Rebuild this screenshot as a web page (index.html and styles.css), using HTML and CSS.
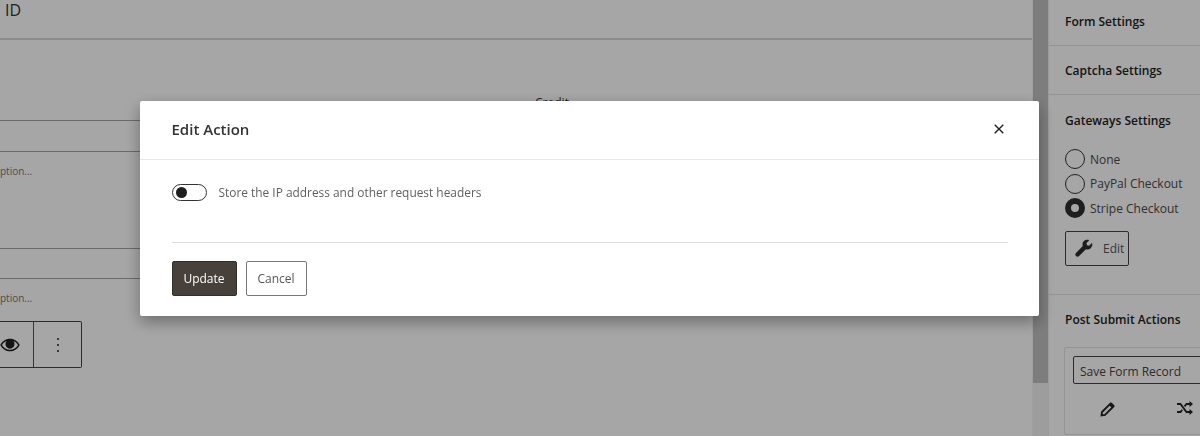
FILE: index.html
```html
<!DOCTYPE html>
<html>
<head>
    <link rel="stylesheet" href="styles.css">
</head>
<body>
    <div class="page">
        <!-- Form editor -->
        <div class="editor">
            <div class="editor-header">ID</div>
            <div class="editor-title">Credit</div>
            <div class="field-line"></div>
            <div class="field-line field-line-second"></div>
            <div class="field-hint">ption...</div>
            <div class="field-line field-line-third"></div>
            <div class="field-line field-line-fourth"></div>
            <div class="field-hint">ption...</div>
            <div class="field-tools">
                <button class="tool tool-eye">
                    <svg width="22" height="16" viewBox="0 0 22 16">
                        <path fill="#1f1f1f" d="M11 1C6.200 1 2.300 4 .3 8c2 4 5.900 7 10.700 7s8.700-3 10.700-7c-2-4-5.900-7-10.700-7zm0 12.300C7.400 13.300 4 11.300 2.200 8 3.400 6 5.100 4.500 7.200 3.600 6.400 4.500 6 5.700 6 7c0 2.800 2.200 5 5 5s5-2.200 5-5c0-1.300-.4-2.500-1.200-3.400 2.100.9 3.800 2.400 5 4.400-1.800 3.300-5.200 5.300-8.800 5.300z"/>
                    </svg>
                </button>
                <button class="tool tool-more">
                    <svg width="4" height="16" viewBox="0 0 4 16">
                        <circle cx="2" cy="2" r="1.100" fill="#333"/>
                        <circle cx="2" cy="8" r="1.100" fill="#333"/>
                        <circle cx="2" cy="14" r="1.100" fill="#333"/>
                    </svg>
                </button>
            </div>
        </div>

        <div class="scrollbar"><div class="scrollbar-thumb"></div></div>

        <!-- Sidebar -->
        <div class="sidebar">
            <div class="panel panel-closed">Form Settings</div>
            <div class="panel panel-closed">Captcha Settings</div>
            <div class="panel panel-gateways">
                <div class="panel-title">Gateways Settings</div>
                <label class="radio"><span class="radio-dot"></span>None</label>
                <label class="radio"><span class="radio-dot"></span>PayPal Checkout</label>
                <label class="radio"><span class="radio-dot radio-checked"></span>Stripe Checkout</label>
                <button class="edit-button">
                    <svg width="18" height="18" viewBox="0 0 18 18">
                        <path fill="#2b2b2b" d="M17.300 4.300c-.1-.3-.4-.3-.6-.1l-2.500 2.500-2.300-.4-.4-2.300L14 1.500c.2-.2.100-.5-.1-.6-1.700-.5-3.700-.1-5 1.200-1.400 1.400-1.700 3.300-1.100 5L1 13.900c-.9.900-.9 2.200 0 3.100.9.900 2.200.9 3.100 0l6.800-6.800c1.700.6 3.600.2 5-1.200 1.300-1.300 1.700-3.200 1.200-4.700z"/>
                    </svg>
                    Edit
                </button>
            </div>
            <div class="panel panel-actions">
                <div class="panel-title">Post Submit Actions</div>
                <div class="action-card">
                    <div class="action-name">Save Form Record</div>
                    <div class="action-icons">
                        <svg width="16" height="16" viewBox="0 0 16 16">
                            <path fill="none" stroke="#222" stroke-width="1.800" d="M2 11L10.500 2.500l3 3L5 14l-3.500.5z"/>
                            <path fill="#222" d="M9 4l3 3 2.500-2.500-3-3z"/>
                        </svg>
                        <svg width="16" height="14" viewBox="0 0 16 14">
                            <path fill="none" stroke="#222" stroke-width="1.800" d="M0 3h3.500l6 8H13M0 11h3.500l1.700-2.300M7.500 5.300L9.500 3H13"/>
                            <path fill="#222" d="M12.500 0l3.500 3-3.500 3zM12.500 8l3.500 3-3.500 3z"/>
                        </svg>
                    </div>
                </div>
            </div>
        </div>
    </div>

    <div class="overlay"></div>

    <!-- Edit action dialog -->
    <div class="modal">
        <div class="modal-header">
            <span class="modal-title">Edit Action</span>
            <svg class="modal-close" width="10" height="10" viewBox="0 0 10 10">
                <path stroke="#222" stroke-width="1.400" d="M.7.7l8.600 8.600M9.300.7L.7 9.300"/>
            </svg>
        </div>
        <div class="modal-body">
            <div class="toggle-row">
                <span class="toggle"><span class="toggle-knob"></span></span>
                <span>Store the IP address and other request headers</span>
            </div>
            <div class="modal-actions">
                <button class="btn btn-primary">Update</button>
                <button class="btn btn-secondary">Cancel</button>
            </div>
        </div>
    </div>
</body>
</html>
```

FILE: styles.css
```css
html, body {
    height: 100%;
    margin: 0;
    overflow: hidden;
}

body {
    background-color: #fff;
    color: #333;
    font-family: "Open Sans", "Noto Sans", sans-serif;
}

.page {
    display: flex;
    height: 436px;
}

button {
    font-family: inherit;
    cursor: pointer;
}

/* Form editor */
.editor {
    width: 1033px;
    flex-shrink: 0;
    border-right: 1px solid #f4f4f4;
    box-sizing: border-box;
}

.editor-header {
    height: 38px;
    padding-left: 5px;
    border-bottom: 2px solid #d8d8d8;
    font-size: 16px;
    line-height: 21px;
    color: #333;
}

.editor-title {
    height: 25px;
    margin-top: 55px;
    padding-left: 72px;
    text-align: center;
    font-size: 12px;
    line-height: 16px;
}

.field-line {
    height: 1px;
    background-color: #a4a4a4;
}

.field-line-second {
    margin-top: 30px;
}

.field-line-third {
    margin-top: 70px;
}

.field-line-fourth {
    margin-top: 29px;
}

.field-hint {
    margin-top: 12px;
    font-size: 10px;
    line-height: 14px;
    color: #777;
}

.field-tools {
    display: flex;
    width: 82px;
    height: 47px;
    margin-top: 16px;
    box-sizing: border-box;
    border: 1px solid #444;
    border-left: none;
    border-radius: 0 2px 2px 0;
}

.tool {
    display: flex;
    align-items: center;
    justify-content: center;
    padding: 0;
    background: none;
    border: none;
}

.tool-eye {
    width: 34px;
    border-right: 1px solid #555;
    justify-content: flex-end;
    padding-right: 13px;
    box-sizing: border-box;
}

.tool-more {
    width: 47px;
}

/* Scrollbar */
.scrollbar {
    width: 15px;
    flex-shrink: 0;
    background-color: #f1f1f1;
}

.scrollbar-thumb {
    height: 383px;
    background-color: #c1c1c1;
}

/* Sidebar */
.sidebar {
    flex: 1;
    min-width: 0;
    border-left: 1px solid #eee;
    font-size: 12px;
}

.panel {
    padding: 0 16px;
    border-bottom: 1px solid #e4e4e4;
}

.panel-closed {
    height: 31px;
    padding-top: 14px;
    font-weight: 600;
    line-height: 16px;
    color: #222;
}

.panel-closed + .panel-closed {
    padding-top: 17px;
}

.panel-title {
    font-weight: 600;
    line-height: 16px;
    color: #222;
}

.panel-gateways {
    height: 200px;
    padding-top: 18px;
    box-sizing: border-box;
}

.panel-gateways .panel-title {
    margin-bottom: 18px;
}

.radio {
    display: flex;
    align-items: center;
    gap: 5px;
    height: 24.5px;
    color: #4a4a4a;
    white-space: nowrap;
}

.radio-dot {
    width: 20px;
    height: 20px;
    flex-shrink: 0;
    box-sizing: border-box;
    border: 1px solid #333;
    border-radius: 50%;
    background-color: #fff;
}

.radio-checked {
    border: 6px solid #2f2f2f;
}

.edit-button {
    display: flex;
    align-items: center;
    gap: 10px;
    width: 64px;
    height: 35px;
    margin-top: 10px;
    padding: 0 0 0 9px;
    box-sizing: border-box;
    background: none;
    border: 1px solid #444;
    border-radius: 2px;
    font-size: 12px;
    color: #555;
}

.panel-actions {
    padding-top: 17px;
    border-bottom: none;
}

.action-card {
    width: 170px;
    height: 88px;
    margin: 19px 0 0 -1px;
    padding: 8px;
    box-sizing: border-box;
    border: 1px solid #e4e4e4;
    border-radius: 2px;
}

.action-name {
    height: 28px;
    padding-left: 6px;
    box-sizing: border-box;
    border: 1px solid #444;
    border-radius: 2px 0 0 2px;
    line-height: 29px;
    color: #444;
    white-space: nowrap;
}

.action-icons {
    display: flex;
    gap: 61px;
    padding: 17px 0 0 27px;
}

/* Overlay and dialog */
.overlay {
    position: fixed;
    inset: 0;
    background-color: rgba(0, 0, 0, 0.35);
}

.modal {
    position: fixed;
    top: 101px;
    left: 140px;
    width: 899px;
    height: 215px;
    border-radius: 2px;
    background-color: #fff;
    box-shadow: 0 6px 16px rgba(0, 0, 0, 0.35);
}

.modal-header {
    display: flex;
    align-items: center;
    justify-content: space-between;
    height: 59px;
    padding: 0 35.5px 2px 31.5px;
    box-sizing: border-box;
    border-bottom: 1px solid #e8e8e8;
}

.modal-title {
    font-size: 15px;
    font-weight: 600;
    color: #333;
}

.modal-body {
    padding: 0 31px 0 31.5px;
}

.toggle-row {
    display: flex;
    align-items: center;
    gap: 12px;
    height: 83px;
    padding-bottom: 18px;
    box-sizing: border-box;
    border-bottom: 1px solid #ddd;
    font-size: 11.9px;
    color: #5f5f5f;
}

.toggle {
    display: flex;
    align-items: center;
    width: 35px;
    height: 17px;
    padding: 0 3px;
    box-sizing: border-box;
    border: 1px solid #333;
    border-radius: 9px;
}

.toggle-knob {
    width: 11px;
    height: 11px;
    border-radius: 50%;
    background-color: #1e1e1e;
}

.modal-actions {
    display: flex;
    gap: 9px;
    margin-top: 18px;
}

.btn {
    height: 35px;
    padding: 0;
    border-radius: 2px;
    font-size: 12px;
}

.btn-primary {
    width: 65px;
    border: 1px solid #33302c;
    background-color: #48413b;
    color: #fff;
}

.btn-secondary {
    width: 61px;
    border: 1px solid #777;
    background-color: #fff;
    color: #555;
}
```
